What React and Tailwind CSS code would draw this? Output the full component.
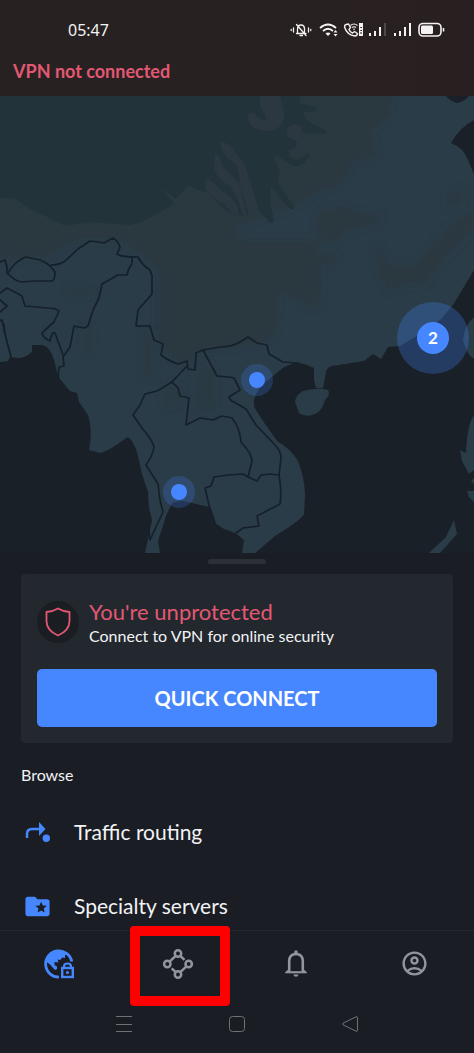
import { MdFolderSpecial, MdOutlineAccountCircle } from "react-icons/md";

function WorldMap() {
  return (
    <svg
      viewBox="0 96 474 457"
      preserveAspectRatio="xMidYMid slice"
      className="block h-full w-full"
      aria-hidden="true"
    >
      <defs>
        <filter id="soft" x="-10%" y="-10%" width="120%" height="120%">
          <feGaussianBlur stdDeviation="3.5" />
        </filter>
        <clipPath id="land">
          <path d="M0 96H446Q450 101 457 103Q464 102 469 96H474V120Q460 127 451 143Q464 148 468 160L474 174V270L453 305L440 320L420 334L400 346L388 347L381 359L373 354L364 361L332 366Q327 367 326 372L323 388H316L314 380L314 368Q305 364 297 362L284 367L268 380Q258 386 254 400Q253 406 256 410L265 424L278 442Q290 448 298 461Q305 480 305 495L304 514Q300 521 275 536L255 553H242L244 540L235 533L224 529L215 523L209 507L192 503Q182 499 172 503L166 516L158 541L160 553H145L149 535L152 520L149 508L148 492L142 474L137 452Q133 440 128 437L110 449L101 453L89 450Q93 430 88 415L79 402L77 393L70 391L60 379L57 372L54 360Q50 346 42 345H32V352Q25 358 18 358L10 357L8 361L0 362Z" />
        </clipPath>
      </defs>
      <rect y="96" width="474" height="457" fill="#192028" />
      <g clipPath="url(#land)">
        <rect y="96" width="474" height="457" fill="#2a3c48" />
        <g filter="url(#soft)" fill="#2b3740">
          <path d="M-10 86H394L388 118L370 130L376 155L350 163L342 185L316 192L300 203L278 212L235 226L240 240L316 240L320 275L322 300L312 310L300 300L278 292L275 335L255 345L232 346L197 352L188 366L175 360L165 350L158 335V270L145 255L118 240L75 240L50 255L0 260Z" />
          <path d="M316 214L345 206L355 213L383 215L378 224L350 230L335 242L318 240Z" />
          <path d="M378 245L390 268L415 265L440 235L474 208V228L440 262L425 285L400 285L388 292L376 265Z" />
          <path d="M447 196L463 188L461 205L448 208Z" />
          <path d="M316 252L338 256L334 264L318 265Z" />
        </g>
        <g filter="url(#soft)" fill="#2b3740" fillOpacity=".7">
          <path d="M142 330H154V378H142ZM163 386L180 384V405L164 407ZM195 372L214 365V414L196 408ZM83 325H93V354H83Z" />
          <path d="M65 286L95 292L85 299L70 295Z" />
        </g>
        <path
          fill="#22333a"
          d="M0 96H300V103L316 107Q319 111 312 112H303Q305 123 324 129Q329 132 325 134L305 133L296 129Q299 134 301 142Q297 147 290 151Q288 158 297 160L308 153Q312 155 304 163Q297 168 291 165L278 156Q274 153 275 160L280 172L278 183L294 207Q292 212 287 206L271 186L270 200L274 222L270 223L259 211L250 180H238L248 212L247 216H239L231 213Q218 206 208 192Q198 191 189 185L176 199L161 187L174 203L166 209L146 220L130 225L90 222L65 226L45 216L30 209L14 198H0Z"
        />
        <g fill="#2b3841">
          <path d="M221 141Q230 143 238 156Q247 163 249 181L256 208L250 217L245 200L240 178L236 164Q224 158 221 147Z" />
          <path d="M215 154Q221 156 222 165L228 173Q239 180 241 190L247 216L243 216L238 200L230 186Q215 178 214 166Z" />
          <path d="M206 178Q214 181 222 191Q232 196 237 206L240 216L232 213L223 203Q206 196 205 184Z" />
          <path d="M248 114Q252 111 257 116Q265 124 266 117L260 106V96H280L284 112Q285 128 270 131Q252 132 248 119Z" />
          <path d="M287 129Q293 121 301 126L302 138Q303 148 294 155L287 151Q299 147 297 142L287 136Z" />
        </g>
      </g>
      <g fill="#2a3c48">
        <path d="M295 402Q295 396 303 391Q318 387 328 390Q331 394 325 400Q322 411 315 414Q306 418 299 413Z" />
        <path d="M474 317Q464 326 463 340Q466 352 472 358H474Z" />
        <path d="M474 415Q467 425 466 453L460 450L462 461L469 474L474 470Z" />
        <path d="M474 478L471 481L474 484ZM467 491H474V502L469 497Z" />
        <path d="M454 520L457 534L440 553H429L446 537Z" />
      </g>
      <g
        fill="none"
        stroke="#15202b"
        strokeWidth="1.7"
        strokeLinejoin="round"
        strokeLinecap="round"
      >
        <path d="M0 262L5 260L7 267L7 273Q15 281 21 282L35 281H52Q55 280 55 272Q50 264 40 260L26 257Q15 261 8 273" />
        <path d="M51 265Q60 265 65 261L78 249L90 241Q98 242 104 243L113 238Q118 241 120 247L117 254Q121 257 138 257Q142 265 150 270L152 276V294L138 310L136 326L150 326L154 340L163 344L161 355Q167 360 178 364L187 361L188 369L195 370L196 353L203 350L220 347Q232 347 240 342L248 337L257 343L267 345L269 354L283 362L297 363" />
        <path d="M132 257Q133 264 129 268L127 275L118 275L102 284L99 298L93 310L88 326L84 328L74 326L70 347L63 357L64 366L59 367L58 380M63 355L55 333Q52 331 50 341Q43 338 42 333Q47 328 54 322L59 311Q55 308 48 308L25 306L22 296L7 288L0 293M0 300L7 306L0 312M0 320Q6 324 4 332M2 320L6 338L11 357" />
        <path d="M187 366L172 382L157 391L145 394L140 405L133 415L142 428Q153 441 154 447Q153 455 146 465L158 484L160 500L163 512L150 540L149 530" />
        <path d="M172 382L178 388L180 396L189 398L186 425L200 418L213 420L222 416L232 418Q240 428 241 442Q252 454 252 461L248 477" />
        <path d="M203 350L217 376Q230 377 234 378L240 390L229 397Q230 401 234 402L246 409L256 425L275 445Q281 451 281 458L279 475Q282 492 280 504L257 516L259 526L243 528L236 533" />
        <path d="M215 523L209 505L205 488L211 486L214 477L228 475L243 474L248 477L257 481L261 475L270 474L279 475" />
      </g>
      <g fill="#4687ff">
        <circle cx="257" cy="380" r="16" fillOpacity=".22" />
        <circle cx="257" cy="380" r="8" />
        <circle cx="179" cy="492" r="16" fillOpacity=".22" />
        <circle cx="179" cy="492" r="8" />
        <circle cx="433" cy="338" r="36" fillOpacity=".27" />
        <circle cx="433" cy="338" r="16" />
      </g>
      <text
        x="433"
        y="344"
        fill="#fff"
        textAnchor="middle"
        className="font-['Lato',sans-serif] text-[17px] font-bold"
      >
        2
      </text>
    </svg>
  );
}

function StatusIcons() {
  return (
    <svg viewBox="0 0 156 16" className="h-4 w-39" fill="none" stroke="#f4f2f2" aria-hidden="true">
      <g strokeWidth="1.300" strokeLinecap="round">
        <path d="M6.500 11.500H16M7.500 11V7.500Q7.500 3 11 3Q14.500 3 14.500 7V11M6.500 2.500L16 13.500M10 13.500H12.500" />
        <path d="M3.500 6V10M1.200 7.500V8.500M18.500 6V10M20.800 7.500V8.500" />
      </g>
      <g strokeWidth="1.800">
        <path d="M30 6Q38 -1 46 6M33 9Q38 4.500 43 9" />
        <path d="M35.500 11.500Q38 9.500 40.500 11.500L38 14Z" fill="#f4f2f2" stroke="none" />
        <path d="M43.500 10.500L45.500 8L47.500 10.500ZM43.500 12L45.500 14.500L47.500 12Z" fill="#f4f2f2" stroke="none" />
      </g>
      <path
        d="M56 2.500L58.500 2L60.500 5.500L59 7.500Q60 10 62.500 11L64.500 9.500L67.500 11.500Q67 14 65 14Q57 13 54.500 5Q54.500 3 56 2.500Z"
        strokeWidth="1.400"
      />
      <path d="M60.500 3.500Q64 0.500 67.500 3.500M62 5.500Q64 4 66 5.500M64 6.500V8" strokeWidth="1.200" />
      <path d="M69 1H73V14H69Z" fill="#f4f2f2" stroke="none" />
      <path d="M70.300 5.500H72M70.300 8.500H72M71 10V12" stroke="#272122" strokeWidth="1" />
      <g strokeWidth="2">
        <path d="M80 14V11M85 14V9M90 14V5" />
        <path d="M95 14V1" stroke="#5b5657" strokeWidth="1.500" />
        <path d="M105 14V11M110 14V9M115 14V5M120 14V1" />
      </g>
      <g strokeWidth="1.600">
        <rect x="129" y="1.500" width="22" height="12.500" rx="4" />
        <rect x="131" y="3.500" width="12" height="8.500" rx="1.500" fill="#f4f2f2" stroke="none" />
        <path d="M153.500 6V9.500" />
      </g>
    </svg>
  );
}

function ShieldIcon() {
  return (
    <svg viewBox="0 0 42 42" className="h-[42px] w-[42px]" aria-hidden="true">
      <path
        d="M21 7.500Q26 10.500 32.500 11V20Q32.500 29.500 21 34.500Q9.500 29.500 9.500 20V11Q16 10.500 21 7.500Z"
        fill="none"
        stroke="#e25872"
        strokeWidth="1.800"
        strokeLinejoin="round"
      />
    </svg>
  );
}

function RouteIcon() {
  return (
    <svg viewBox="0 0 26 22" className="h-[22px] w-[26px]" fill="#4687ff" aria-hidden="true">
      <path d="M2 17V13Q2 8 7 8H15" fill="none" stroke="#4687ff" strokeWidth="2.500" />
      <path d="M14 1L20.500 8L14 15Z" />
      <circle cx="21.300" cy="17.300" r="3.700" />
    </svg>
  );
}

function GlobeLockIcon() {
  return (
    <svg viewBox="0 0 32 32" className="h-8 w-8" fill="none" stroke="#4687ff" aria-hidden="true">
      <path d="M28.800 13.500A13.200 13.200 0 1 0 16 29.200" strokeWidth="2.800" />
      <path
        d="M3 12Q5 4 14 2.500L21 3L23.500 6L22 7.500V10L19.500 9.500L17 12L14.500 11.500L15.500 14.500L11.500 14V17L14 18.500V21L12 22L7 16.500L3 13.500Z"
        fill="#4687ff"
        stroke="none"
      />
      <rect x="19.200" y="20" width="10.600" height="9" strokeWidth="2.400" />
      <path d="M21 20V18.500Q21 15.500 24.500 15.500Q28 15.500 28 18.500V20" strokeWidth="2.200" />
      <circle cx="24.500" cy="24.500" r="1.600" fill="#4687ff" stroke="none" />
    </svg>
  );
}

function MeshIcon() {
  return (
    <svg viewBox="0 0 32 32" className="h-8 w-8" fill="none" stroke="#92959d" strokeWidth="2.500" aria-hidden="true">
      <circle cx="16" cy="5.500" r="3.200" />
      <circle cx="5.300" cy="16" r="3.200" />
      <circle cx="26.700" cy="16" r="3.200" />
      <circle cx="16" cy="26.500" r="3.200" />
      <path d="M13.700 7.800L7.600 13.700M18.300 7.800L22.500 11.800M24.400 18.300L18.300 24.200M9.700 20.400L13.700 24.200" />
    </svg>
  );
}

function BellIcon() {
  return (
    <svg viewBox="0 0 32 32" className="h-8 w-8" fill="none" stroke="#92959d" aria-hidden="true">
      <path d="M9.200 24V13.500Q9.200 6 16 6Q22.800 6 22.800 13.500V24" strokeWidth="2.600" />
      <path d="M5.500 25V24L9 21.500V23.500H23V21.500L26.500 24V25Z" fill="#92959d" strokeWidth=".6" />
      <path d="M16 4V5.500" strokeWidth="3.400" strokeLinecap="round" />
      <path d="M13.300 26.500H18.700Q18 28.800 16 28.800Q14 28.800 13.300 26.500Z" fill="#92959d" stroke="none" />
    </svg>
  );
}

const navButton = "flex flex-1 items-center justify-center";
const browseLink = "flex h-8 items-center gap-[23px] pl-[3px] text-[21px] leading-7";

export default function App() {
  return (
    <div className="relative flex min-h-screen flex-col bg-[#1a1d24] font-['Lato',sans-serif] text-[#f2f3f5]">
      <header className="flex h-24 flex-col bg-linear-to-r from-[#282122] via-[#272122] to-[#291f20]">
        <div className="flex h-[59px] items-center justify-between pr-7 pl-[68px]">
          <time className="font-['Noto_Sans',sans-serif] text-[16px] leading-6">05:47</time>
          <StatusIcons />
        </div>
        <h1 className="px-[13px] text-[18px] leading-6 font-bold text-[#e25872]">VPN not connected</h1>
      </header>

      <section className="h-[457px] bg-[#192028]" aria-label="Server map">
        <WorldMap />
      </section>

      <main className="flex flex-1 flex-col px-[21px] pt-1.5">
        <div className="h-[5px] w-[58px] self-center rounded-full bg-[#2d2f36]" />
        <section className="mt-2.5 rounded-sm bg-[#23272e] px-4 pt-6 pb-4">
          <div className="flex items-center gap-2.5">
            <div className="rounded-full bg-[#1a1d22]">
              <ShieldIcon />
            </div>
            <div>
              <h2 className="text-[22px] leading-7 text-[#e25872]">You're unprotected</h2>
              <p className="text-[16px] leading-5">Connect to VPN for online security</p>
            </div>
          </div>
          <button
            type="button"
            className="mt-[23px] h-[58px] w-full rounded-[5px] bg-[#4687ff] text-[20px] font-bold text-white"
          >
            QUICK CONNECT
          </button>
        </section>

        <h3 className="mt-5 text-[16px] leading-6">Browse</h3>
        <ul className="mt-[29px] flex flex-col gap-[42px] pb-2">
          <li>
            <a href="#routing" className={browseLink}>
              <span className="flex w-[27px] justify-center">
                <RouteIcon />
              </span>
              Traffic routing
            </a>
          </li>
          <li>
            <a href="#servers" className={browseLink}>
              <span className="flex w-[27px] justify-center">
                <MdFolderSpecial className="shrink-0 text-[#4687ff]" size={29} />
              </span>
              Specialty servers
            </a>
          </li>
        </ul>
      </main>

      <nav className="relative flex h-[66px] border-t border-[#24272e]" aria-label="Sections">
        <button type="button" className={navButton} aria-label="VPN">
          <GlobeLockIcon />
        </button>
        <button type="button" className={navButton} aria-label="Meshnet">
          <MeshIcon />
        </button>
        <button type="button" className={navButton} aria-label="Notifications">
          <BellIcon />
        </button>
        <button type="button" className={navButton} aria-label="Profile">
          <MdOutlineAccountCircle size={29} color="#92959d" />
        </button>
        <div className="pointer-events-none absolute -top-[5px] left-[130px] h-20 w-[100px] rounded-sm border-[10px] border-[#fe0000]" />
      </nav>

      <div className="flex h-[57px] justify-center gap-[97px] pt-5">
        <button type="button" className="h-4 w-4" aria-label="Recent apps">
          <svg viewBox="0 0 16 16" stroke="#6f7177" strokeWidth="1">
            <path d="M0 .5H16M0 8.500H16M0 15.500H16" />
          </svg>
        </button>
        <button type="button" className="h-4 w-4" aria-label="Home">
          <svg viewBox="0 0 16 16" fill="none" stroke="#6f7177" strokeWidth="1">
            <rect x=".5" y=".5" width="15" height="15" rx="3" />
          </svg>
        </button>
        <button type="button" className="h-4 w-4" aria-label="Back">
          <svg viewBox="0 0 16 16" fill="none" stroke="#6f7177" strokeWidth="1" strokeLinejoin="round">
            <path d="M14 .8Q15.500 .3 15.500 2V14Q15.500 15.700 14 15.200L1 8.800Q0 8 1 7.200Z" />
          </svg>
        </button>
      </div>
    </div>
  );
}
